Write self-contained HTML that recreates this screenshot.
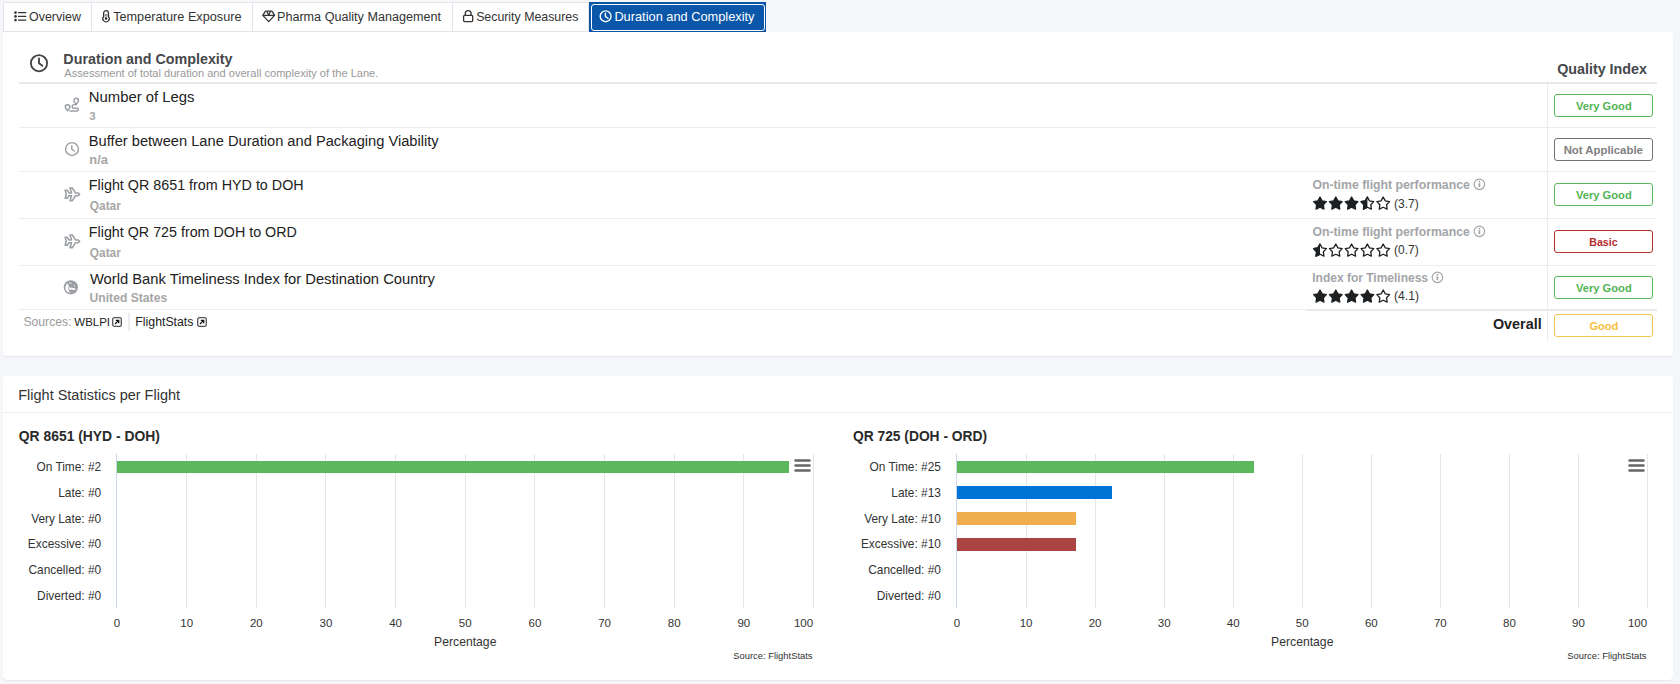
<!DOCTYPE html>
<html><head><meta charset="utf-8"><style>
html,body{margin:0;padding:0;}
body{width:1680px;height:684px;overflow:hidden;background:#f5f6fa;position:relative;font-family:"Liberation Sans",sans-serif;}
.t{position:absolute;white-space:nowrap;font-family:"Liberation Sans",sans-serif;}
svg{overflow:visible}
</style></head><body>
<div style="position:absolute;left:3px;top:2px;width:586px;height:30px;background:#fff;border:1px solid #e4e5e8;box-sizing:border-box;"></div>
<div style="position:absolute;left:91px;top:2px;width:1px;height:30px;background:#e4e5e8;"></div>
<div style="position:absolute;left:252px;top:2px;width:1px;height:30px;background:#e4e5e8;"></div>
<div style="position:absolute;left:452px;top:2px;width:1px;height:30px;background:#e4e5e8;"></div>
<div style="position:absolute;left:589px;top:2px;width:177px;height:30px;background:#0a55a5;"></div>
<div style="position:absolute;left:590.5px;top:3.5px;width:174px;height:27px;border:1px solid #fff;border-radius:3px;box-sizing:border-box;background:#0a56a8;"></div>
<div class="t" style="left:29.04px;top:10.00px;font-size:12.44px;line-height:14px;color:#333;">Overview</div>
<div class="t" style="left:113.15px;top:10.00px;font-size:12.7px;line-height:14px;color:#333;">Temperature Exposure</div>
<div class="t" style="left:276.99px;top:10.00px;font-size:12.62px;line-height:14px;color:#333;">Pharma Quality Management</div>
<div class="t" style="left:476.14px;top:10.00px;font-size:12.35px;line-height:14px;color:#333;">Security Measures</div>
<div class="t" style="left:614.38px;top:9.00px;font-size:12.81px;line-height:15px;color:#fff;">Duration and Complexity</div>
<svg style="position:absolute;left:13px;top:9px" width="15" height="15" viewBox="0 0 15 15"><g fill="#333"><circle cx="2.5" cy="3.6" r="1.3"/><circle cx="2.5" cy="7.4" r="1.3"/><circle cx="2.5" cy="11.1" r="1.3"/></g><g stroke="#333" stroke-width="1.3" stroke-linecap="round"><line x1="5.5" y1="3.6" x2="12.8" y2="3.6"/><line x1="5.5" y1="7.4" x2="12.8" y2="7.4"/><line x1="5.5" y1="11.1" x2="12.8" y2="11.1"/></g></svg>
<svg style="position:absolute;left:101px;top:9px" width="11" height="15" viewBox="0 0 11 15"><path d="M2.6 7.54 V4.15 A2.45 2.45 0 0 1 7.5 4.15 V7.54 A3.2 3.2 0 1 1 2.6 7.54 Z" fill="#fff" stroke="#333" stroke-width="1.2"/><rect x="3.3" y="5.0" width="3.5" height="2.6" fill="#9a9a9a"/><circle cx="5.05" cy="9.6" r="1.25" fill="#222"/></svg>
<svg style="position:absolute;left:261px;top:9px" width="15" height="14" viewBox="0 0 15 14"><g fill="none" stroke="#333" stroke-width="1.3" stroke-linejoin="round"><path d="M4.5 2.2 H10.9 L13.6 6.4 L7.7 12.6 L1.8 6.4Z"/><path d="M1.8 6.4 H13.6"/><path d="M5.9 2.3 L7.7 6.4 L9.5 2.3"/></g></svg>
<svg style="position:absolute;left:461px;top:9px" width="14" height="14" viewBox="0 0 14 14"><g fill="none" stroke="#333" stroke-width="1.3"><path d="M4.3 6.3 V4.5 a2.9 2.9 0 0 1 5.8 0 V6.3"/><rect x="2.6" y="6.3" width="9.1" height="6.3" rx="1"/></g></svg>
<svg style="position:absolute;left:598px;top:9px" width="15" height="15" viewBox="0 0 15 15"><g fill="none" stroke="#fff" stroke-width="1.4" stroke-linecap="round"><circle cx="7.6" cy="7.3" r="5.4"/><path d="M7.4 4.2 V7.5 L9.9 9.3"/></g></svg>
<div style="position:absolute;left:3px;top:32px;width:1670px;height:324px;background:#fff;border-radius:0 4px 4px 4px;box-shadow:0 1px 1px rgba(0,0,0,.06);"></div>
<svg style="position:absolute;left:29px;top:53px" width="20" height="20" viewBox="0 0 20 20"><g fill="none" stroke="#444" stroke-width="1.85" stroke-linecap="round"><circle cx="10" cy="10.2" r="8.1"/><path d="M10 5.3 V10.2 L13.4 12.7"/></g></svg>
<div class="t" style="left:63.37px;top:51.00px;font-size:14.31px;line-height:16px;color:#46484b;font-weight:bold;">Duration and Complexity</div>
<div class="t" style="left:64.30px;top:67.00px;font-size:11.09px;line-height:12px;color:#999;">Assessment of total duration and overall complexity of the Lane.</div>
<div class="t" style="left:1557.13px;top:61.00px;font-size:14.32px;line-height:16px;color:#46484b;font-weight:bold;">Quality Index</div>
<div style="position:absolute;left:19px;top:82px;width:1638px;height:2px;background:#e8e8e8;"></div>
<div style="position:absolute;left:19px;top:127px;width:1638px;height:1px;background:#ececec;"></div>
<div style="position:absolute;left:19px;top:171px;width:1638px;height:1px;background:#ececec;"></div>
<div style="position:absolute;left:19px;top:218px;width:1638px;height:1px;background:#ececec;"></div>
<div style="position:absolute;left:19px;top:265px;width:1638px;height:1px;background:#ececec;"></div>
<div style="position:absolute;left:19px;top:309px;width:1288px;height:1px;background:#ececec;"></div>
<div style="position:absolute;left:1307px;top:309px;width:350px;height:2px;background:#e8e8e8;"></div>
<div style="position:absolute;left:1547px;top:84px;width:1px;height:256px;background:#ececec;"></div>
<div class="t" style="left:88.81px;top:89.00px;font-size:14.86px;line-height:16px;color:#222;">Number of Legs</div>
<div class="t" style="left:89.30px;top:110.00px;font-size:11.5px;line-height:12px;color:#a6a6a6;font-weight:bold;">3</div>
<div class="t" style="left:88.83px;top:133.00px;font-size:14.67px;line-height:16px;color:#222;">Buffer between Lane Duration and Packaging Viability</div>
<div class="t" style="left:89.36px;top:152.00px;font-size:12.88px;line-height:15px;color:#a6a6a6;font-weight:bold;">n/a</div>
<div class="t" style="left:88.85px;top:177.00px;font-size:14.32px;line-height:16px;color:#222;">Flight QR 8651 from HYD to DOH</div>
<div class="t" style="left:89.83px;top:199.00px;font-size:11.88px;line-height:14px;color:#a6a6a6;font-weight:bold;">Qatar</div>
<div class="t" style="left:88.86px;top:224.00px;font-size:14.29px;line-height:16px;color:#222;">Flight QR 725 from DOH to ORD</div>
<div class="t" style="left:89.83px;top:246.00px;font-size:11.88px;line-height:14px;color:#a6a6a6;font-weight:bold;">Qatar</div>
<div class="t" style="left:89.93px;top:271.00px;font-size:14.75px;line-height:16px;color:#222;">World Bank Timeliness Index for Destination Country</div>
<div class="t" style="left:89.57px;top:291.00px;font-size:12.15px;line-height:14px;color:#a6a6a6;font-weight:bold;">United States</div>
<svg style="position:absolute;left:64px;top:97px" width="16" height="16" viewBox="0 0 16 16"><g fill="none" stroke="#9a9da1" stroke-width="1.45" stroke-linecap="round"><path d="M3.6 13.8 C2 12 1.3 11.2 1.3 10.1 a2.3 2.3 0 0 1 4.6 0 C5.9 11.2 5.2 12 3.6 13.8Z"/><path d="M12.2 7.4 C10.6 5.6 9.9 4.8 9.9 3.6 a2.3 2.3 0 0 1 4.6 0 C14.5 4.8 13.8 5.6 12.2 7.4Z"/><path d="M12.2 7.6 H10 a1.8 1.8 0 0 0 0 3.6 H13 a1.4 1.4 0 0 1 0 2.8 H6"/></g></svg>
<svg style="position:absolute;left:64px;top:141px" width="16" height="16" viewBox="0 0 16 16"><g fill="none" stroke="#9a9da1" stroke-width="1.4" stroke-linecap="round"><circle cx="8" cy="8" r="6.4"/><path d="M7.8 4.6 V8.2 L10.3 10"/></g></svg>
<svg style="position:absolute;left:63.8px;top:187.4px" width="17" height="15" viewBox="0 0 17 15"><path d="M1.2 3.3 L3.3 3.3 L5 5.9 L7.6 5.9 L6 1 L8.4 1 L11.5 5.9 L14 5.9 Q15.7 6.9 15.7 7.3 Q15.7 7.7 14 8.7 L11.5 8.7 L8.4 13.6 L6 13.6 L7.6 8.7 L5 8.7 L3.3 11.3 L1.2 11.3 L2.2 7.3Z" fill="none" stroke="#9a9da1" stroke-width="1.55" stroke-linejoin="round"/></svg>
<svg style="position:absolute;left:63.8px;top:234.4px" width="17" height="15" viewBox="0 0 17 15"><path d="M1.2 3.3 L3.3 3.3 L5 5.9 L7.6 5.9 L6 1 L8.4 1 L11.5 5.9 L14 5.9 Q15.7 6.9 15.7 7.3 Q15.7 7.7 14 8.7 L11.5 8.7 L8.4 13.6 L6 13.6 L7.6 8.7 L5 8.7 L3.3 11.3 L1.2 11.3 L2.2 7.3Z" fill="none" stroke="#9a9da1" stroke-width="1.55" stroke-linejoin="round"/></svg>
<svg style="position:absolute;left:63px;top:280px" width="16" height="16" viewBox="0 0 16 16"><circle cx="7.85" cy="7.35" r="7.1" fill="#9a9da1"/><g fill="#fff"><path d="M3.3 4.4 Q4.9 4.0 5.8 5.4 Q5.0 8.2 5.6 10.2 Q6.4 11.8 7.9 12.9 Q4.3 12.8 2.5 9.6 Q1.9 6.6 3.3 4.4 Z"/><path d="M6.0 7.5 Q9.5 7.6 12.4 8.6 L12.5 10.0 Q9.3 9.3 6.2 9.4 Z"/><circle cx="4.4" cy="3.9" r=".6"/><circle cx="6.6" cy="2.9" r=".6"/><circle cx="8.3" cy="3.5" r=".55"/><circle cx="11.4" cy="5.7" r=".6"/></g></svg>
<div class="t" style="left:1312.41px;top:178.00px;font-size:12.28px;line-height:14px;color:#a3a5a8;font-weight:bold;">On-time flight performance</div>
<svg style="position:absolute;left:1472.5px;top:177.7px" width="13" height="13" viewBox="0 0 13 13"><circle cx="6.4" cy="6.3" r="5.25" fill="none" stroke="#a3a5a8" stroke-width="1.2"/><rect x="5.55" y="5.2" width="1.7" height="4" fill="#a3a5a8"/><circle cx="6.4" cy="3.6" r=".95" fill="#a3a5a8"/></svg>
<svg style="position:absolute;left:1312.5px;top:195.8px" width="80" height="15" viewBox="0 0 80 15"><defs><clipPath id="hl195"><rect x="-1" y="-1" width="8" height="16"/></clipPath></defs><path transform="translate(0.0,0)" d="M7.00 1.00 L9.09 4.83 L13.37 5.63 L10.38 8.80 L10.94 13.12 L7.00 11.25 L3.06 13.12 L3.62 8.80 L0.63 5.63 L4.91 4.83Z" fill="#1d2023" stroke="#1d2023" stroke-width="1.3" stroke-linejoin="round"/><path transform="translate(15.8,0)" d="M7.00 1.00 L9.09 4.83 L13.37 5.63 L10.38 8.80 L10.94 13.12 L7.00 11.25 L3.06 13.12 L3.62 8.80 L0.63 5.63 L4.91 4.83Z" fill="#1d2023" stroke="#1d2023" stroke-width="1.3" stroke-linejoin="round"/><path transform="translate(31.6,0)" d="M7.00 1.00 L9.09 4.83 L13.37 5.63 L10.38 8.80 L10.94 13.12 L7.00 11.25 L3.06 13.12 L3.62 8.80 L0.63 5.63 L4.91 4.83Z" fill="#1d2023" stroke="#1d2023" stroke-width="1.3" stroke-linejoin="round"/><path transform="translate(47.400000000000006,0)" d="M7.00 1.00 L9.09 4.83 L13.37 5.63 L10.38 8.80 L10.94 13.12 L7.00 11.25 L3.06 13.12 L3.62 8.80 L0.63 5.63 L4.91 4.83Z" fill="none" stroke="#1d2023" stroke-width="1.3" stroke-linejoin="round"/><g transform="translate(47.400000000000006,0)"><path clip-path="url(#hl195)" d="M7.00 1.00 L9.09 4.83 L13.37 5.63 L10.38 8.80 L10.94 13.12 L7.00 11.25 L3.06 13.12 L3.62 8.80 L0.63 5.63 L4.91 4.83Z" fill="#1d2023" stroke="#1d2023" stroke-width="1.3" stroke-linejoin="round"/></g><path transform="translate(63.2,0)" d="M7.00 1.00 L9.09 4.83 L13.37 5.63 L10.38 8.80 L10.94 13.12 L7.00 11.25 L3.06 13.12 L3.62 8.80 L0.63 5.63 L4.91 4.83Z" fill="none" stroke="#1d2023" stroke-width="1.3" stroke-linejoin="round"/></svg>
<div class="t" style="left:1393.98px;top:197.00px;font-size:12.04px;line-height:14px;color:#333;">(3.7)</div>
<div class="t" style="left:1312.41px;top:225.00px;font-size:12.28px;line-height:14px;color:#a3a5a8;font-weight:bold;">On-time flight performance</div>
<svg style="position:absolute;left:1472.5px;top:224.7px" width="13" height="13" viewBox="0 0 13 13"><circle cx="6.4" cy="6.3" r="5.25" fill="none" stroke="#a3a5a8" stroke-width="1.2"/><rect x="5.55" y="5.2" width="1.7" height="4" fill="#a3a5a8"/><circle cx="6.4" cy="3.6" r=".95" fill="#a3a5a8"/></svg>
<svg style="position:absolute;left:1312.5px;top:242.8px" width="80" height="15" viewBox="0 0 80 15"><defs><clipPath id="hl242"><rect x="-1" y="-1" width="8" height="16"/></clipPath></defs><path transform="translate(0.0,0)" d="M7.00 1.00 L9.09 4.83 L13.37 5.63 L10.38 8.80 L10.94 13.12 L7.00 11.25 L3.06 13.12 L3.62 8.80 L0.63 5.63 L4.91 4.83Z" fill="none" stroke="#1d2023" stroke-width="1.3" stroke-linejoin="round"/><g transform="translate(0.0,0)"><path clip-path="url(#hl242)" d="M7.00 1.00 L9.09 4.83 L13.37 5.63 L10.38 8.80 L10.94 13.12 L7.00 11.25 L3.06 13.12 L3.62 8.80 L0.63 5.63 L4.91 4.83Z" fill="#1d2023" stroke="#1d2023" stroke-width="1.3" stroke-linejoin="round"/></g><path transform="translate(15.8,0)" d="M7.00 1.00 L9.09 4.83 L13.37 5.63 L10.38 8.80 L10.94 13.12 L7.00 11.25 L3.06 13.12 L3.62 8.80 L0.63 5.63 L4.91 4.83Z" fill="none" stroke="#1d2023" stroke-width="1.3" stroke-linejoin="round"/><path transform="translate(31.6,0)" d="M7.00 1.00 L9.09 4.83 L13.37 5.63 L10.38 8.80 L10.94 13.12 L7.00 11.25 L3.06 13.12 L3.62 8.80 L0.63 5.63 L4.91 4.83Z" fill="none" stroke="#1d2023" stroke-width="1.3" stroke-linejoin="round"/><path transform="translate(47.400000000000006,0)" d="M7.00 1.00 L9.09 4.83 L13.37 5.63 L10.38 8.80 L10.94 13.12 L7.00 11.25 L3.06 13.12 L3.62 8.80 L0.63 5.63 L4.91 4.83Z" fill="none" stroke="#1d2023" stroke-width="1.3" stroke-linejoin="round"/><path transform="translate(63.2,0)" d="M7.00 1.00 L9.09 4.83 L13.37 5.63 L10.38 8.80 L10.94 13.12 L7.00 11.25 L3.06 13.12 L3.62 8.80 L0.63 5.63 L4.91 4.83Z" fill="none" stroke="#1d2023" stroke-width="1.3" stroke-linejoin="round"/></svg>
<div class="t" style="left:1393.98px;top:243.00px;font-size:12.04px;line-height:14px;color:#333;">(0.7)</div>
<div class="t" style="left:1312.22px;top:271.00px;font-size:12.0px;line-height:14px;color:#a3a5a8;font-weight:bold;">Index for Timeliness</div>
<svg style="position:absolute;left:1430.5px;top:270.9px" width="13" height="13" viewBox="0 0 13 13"><circle cx="6.4" cy="6.3" r="5.25" fill="none" stroke="#a3a5a8" stroke-width="1.2"/><rect x="5.55" y="5.2" width="1.7" height="4" fill="#a3a5a8"/><circle cx="6.4" cy="3.6" r=".95" fill="#a3a5a8"/></svg>
<svg style="position:absolute;left:1312.5px;top:289px" width="80" height="15" viewBox="0 0 80 15"><defs><clipPath id="hl289"><rect x="-1" y="-1" width="8" height="16"/></clipPath></defs><path transform="translate(0.0,0)" d="M7.00 1.00 L9.09 4.83 L13.37 5.63 L10.38 8.80 L10.94 13.12 L7.00 11.25 L3.06 13.12 L3.62 8.80 L0.63 5.63 L4.91 4.83Z" fill="#1d2023" stroke="#1d2023" stroke-width="1.3" stroke-linejoin="round"/><path transform="translate(15.8,0)" d="M7.00 1.00 L9.09 4.83 L13.37 5.63 L10.38 8.80 L10.94 13.12 L7.00 11.25 L3.06 13.12 L3.62 8.80 L0.63 5.63 L4.91 4.83Z" fill="#1d2023" stroke="#1d2023" stroke-width="1.3" stroke-linejoin="round"/><path transform="translate(31.6,0)" d="M7.00 1.00 L9.09 4.83 L13.37 5.63 L10.38 8.80 L10.94 13.12 L7.00 11.25 L3.06 13.12 L3.62 8.80 L0.63 5.63 L4.91 4.83Z" fill="#1d2023" stroke="#1d2023" stroke-width="1.3" stroke-linejoin="round"/><path transform="translate(47.400000000000006,0)" d="M7.00 1.00 L9.09 4.83 L13.37 5.63 L10.38 8.80 L10.94 13.12 L7.00 11.25 L3.06 13.12 L3.62 8.80 L0.63 5.63 L4.91 4.83Z" fill="#1d2023" stroke="#1d2023" stroke-width="1.3" stroke-linejoin="round"/><path transform="translate(63.2,0)" d="M7.00 1.00 L9.09 4.83 L13.37 5.63 L10.38 8.80 L10.94 13.12 L7.00 11.25 L3.06 13.12 L3.62 8.80 L0.63 5.63 L4.91 4.83Z" fill="none" stroke="#1d2023" stroke-width="1.3" stroke-linejoin="round"/></svg>
<div class="t" style="left:1394.07px;top:289.00px;font-size:12.14px;line-height:14px;color:#333;">(4.1)</div>
<div style="position:absolute;left:1554px;top:94px;width:99px;height:23px;box-sizing:border-box;border:1px solid #5cb85c;border-radius:3px;"></div>
<div class="t" style="left:1575.94px;top:100.00px;font-size:11.16px;line-height:12px;color:#52b455;font-weight:bold;">Very Good</div>
<div style="position:absolute;left:1554px;top:138px;width:99px;height:23px;box-sizing:border-box;border:1px solid #737373;border-radius:3px;"></div>
<div class="t" style="left:1563.66px;top:144.00px;font-size:11.38px;line-height:12px;color:#808080;font-weight:bold;">Not Applicable</div>
<div style="position:absolute;left:1554px;top:183px;width:99px;height:23px;box-sizing:border-box;border:1px solid #5cb85c;border-radius:3px;"></div>
<div class="t" style="left:1575.94px;top:189.00px;font-size:11.16px;line-height:12px;color:#52b455;font-weight:bold;">Very Good</div>
<div style="position:absolute;left:1554px;top:230px;width:99px;height:23px;box-sizing:border-box;border:1px solid #b8302f;border-radius:3px;"></div>
<div class="t" style="left:1589.31px;top:236.00px;font-size:10.58px;line-height:12px;color:#b52d2d;font-weight:bold;">Basic</div>
<div style="position:absolute;left:1554px;top:276px;width:99px;height:23px;box-sizing:border-box;border:1px solid #5cb85c;border-radius:3px;"></div>
<div class="t" style="left:1575.94px;top:282.00px;font-size:11.16px;line-height:12px;color:#52b455;font-weight:bold;">Very Good</div>
<div style="position:absolute;left:1554px;top:314px;width:99px;height:23px;box-sizing:border-box;border:1px solid #f6c550;border-radius:3px;"></div>
<div class="t" style="left:1589.46px;top:320.00px;font-size:11.06px;line-height:12px;color:#f4c142;font-weight:bold;">Good</div>
<div class="t" style="left:1492.93px;top:316.00px;font-size:14.37px;line-height:16px;color:#222;font-weight:bold;">Overall</div>
<div class="t" style="left:23.45px;top:315.00px;font-size:12.2px;line-height:14px;color:#9a9a9a;">Sources:</div>
<div class="t" style="left:74.34px;top:316.00px;font-size:11.48px;line-height:12px;color:#222;">WBLPI</div>
<div class="t" style="left:135.32px;top:315.00px;font-size:12.3px;line-height:14px;color:#222;">FlightStats</div>
<svg style="position:absolute;left:112px;top:317px" width="10" height="10" viewBox="0 0 10 10"><rect x=".7" y=".7" width="8.6" height="8.6" rx="1.6" fill="none" stroke="#555" stroke-width="1.3"/><path d="M3 7 L6.6 3.4 M3.8 3.3 H6.7 V6.2" fill="none" stroke="#111" stroke-width="1.3"/></svg>
<svg style="position:absolute;left:196.5px;top:317px" width="10" height="10" viewBox="0 0 10 10"><rect x=".7" y=".7" width="8.6" height="8.6" rx="1.6" fill="none" stroke="#555" stroke-width="1.3"/><path d="M3 7 L6.6 3.4 M3.8 3.3 H6.7 V6.2" fill="none" stroke="#111" stroke-width="1.3"/></svg>
<div style="position:absolute;left:128px;top:313px;width:1.5px;height:18px;background:#ececec;"></div>
<div style="position:absolute;left:3px;top:376px;width:1670px;height:304px;background:#fff;border-radius:4px;box-shadow:0 1px 1px rgba(0,0,0,.06);"></div>
<div class="t" style="left:18.24px;top:387.00px;font-size:14.49px;line-height:16px;color:#333;">Flight Statistics per Flight</div>
<div style="position:absolute;left:4px;top:412px;width:1668px;height:1px;background:#ececec;"></div>
<div class="t" style="left:18.84px;top:428.00px;font-size:13.89px;line-height:16px;color:#2a2a2a;font-weight:bold;">QR 8651 (HYD - DOH)</div>
<div class="t" style="left:852.95px;top:428.00px;font-size:13.81px;line-height:16px;color:#2a2a2a;font-weight:bold;">QR 725 (DOH - ORD)</div>
<div style="position:absolute;left:116px;top:454px;width:1px;height:154px;background:#ccd6eb;"></div>
<div style="position:absolute;left:186px;top:454px;width:1px;height:154px;background:#e6e6e6;"></div>
<div style="position:absolute;left:256px;top:454px;width:1px;height:154px;background:#e6e6e6;"></div>
<div style="position:absolute;left:325px;top:454px;width:1px;height:154px;background:#e6e6e6;"></div>
<div style="position:absolute;left:395px;top:454px;width:1px;height:154px;background:#e6e6e6;"></div>
<div style="position:absolute;left:465px;top:454px;width:1px;height:154px;background:#e6e6e6;"></div>
<div style="position:absolute;left:534px;top:454px;width:1px;height:154px;background:#e6e6e6;"></div>
<div style="position:absolute;left:604px;top:454px;width:1px;height:154px;background:#e6e6e6;"></div>
<div style="position:absolute;left:674px;top:454px;width:1px;height:154px;background:#e6e6e6;"></div>
<div style="position:absolute;left:743px;top:454px;width:1px;height:154px;background:#e6e6e6;"></div>
<div style="position:absolute;left:813px;top:454px;width:1px;height:154px;background:#e6e6e6;"></div>
<div class="t" style="right:1578.80px;top:460.00px;font-size:11.9px;line-height:14px;color:#333;">On Time: #2</div>
<div style="position:absolute;left:117px;top:460.5px;width:672.1px;height:12.8px;background:#5cb85c;"></div>
<div class="t" style="right:1578.80px;top:486.00px;font-size:11.9px;line-height:14px;color:#333;">Late: #0</div>
<div class="t" style="right:1578.80px;top:512.00px;font-size:11.9px;line-height:14px;color:#333;">Very Late: #0</div>
<div class="t" style="right:1578.80px;top:537.00px;font-size:11.9px;line-height:14px;color:#333;">Excessive: #0</div>
<div class="t" style="right:1578.80px;top:563.00px;font-size:11.9px;line-height:14px;color:#333;">Cancelled: #0</div>
<div class="t" style="right:1578.80px;top:589.00px;font-size:11.9px;line-height:14px;color:#333;">Diverted: #0</div>
<div class="t" style="left:-183.00px;width:600px;text-align:center;top:617.00px;font-size:11.5px;line-height:12px;color:#333;">0</div>
<div class="t" style="left:-113.35px;width:600px;text-align:center;top:617.00px;font-size:11.5px;line-height:12px;color:#333;">10</div>
<div class="t" style="left:-43.70px;width:600px;text-align:center;top:617.00px;font-size:11.5px;line-height:12px;color:#333;">20</div>
<div class="t" style="left:25.95px;width:600px;text-align:center;top:617.00px;font-size:11.5px;line-height:12px;color:#333;">30</div>
<div class="t" style="left:95.60px;width:600px;text-align:center;top:617.00px;font-size:11.5px;line-height:12px;color:#333;">40</div>
<div class="t" style="left:165.25px;width:600px;text-align:center;top:617.00px;font-size:11.5px;line-height:12px;color:#333;">50</div>
<div class="t" style="left:234.90px;width:600px;text-align:center;top:617.00px;font-size:11.5px;line-height:12px;color:#333;">60</div>
<div class="t" style="left:304.55px;width:600px;text-align:center;top:617.00px;font-size:11.5px;line-height:12px;color:#333;">70</div>
<div class="t" style="left:374.20px;width:600px;text-align:center;top:617.00px;font-size:11.5px;line-height:12px;color:#333;">80</div>
<div class="t" style="left:443.85px;width:600px;text-align:center;top:617.00px;font-size:11.5px;line-height:12px;color:#333;">90</div>
<div class="t" style="left:503.50px;width:600px;text-align:center;top:617.00px;font-size:11.5px;line-height:12px;color:#333;">100</div>
<div class="t" style="left:165.25px;width:600px;text-align:center;top:635.00px;font-size:12.2px;line-height:14px;color:#333;">Percentage</div>
<div class="t" style="right:867.50px;top:650.00px;font-size:9.4px;line-height:11px;color:#333;">Source: FlightStats</div>
<svg style="position:absolute;left:793.5px;top:458px" width="17" height="15" viewBox="0 0 17 15"><g stroke="#666" stroke-width="2.4" stroke-linecap="round"><line x1="1.5" y1="2.5" x2="15.5" y2="2.5"/><line x1="1.5" y1="7.5" x2="15.5" y2="7.5"/><line x1="1.5" y1="12.5" x2="15.5" y2="12.5"/></g></svg>
<div style="position:absolute;left:956px;top:454px;width:1px;height:154px;background:#ccd6eb;"></div>
<div style="position:absolute;left:1026px;top:454px;width:1px;height:154px;background:#e6e6e6;"></div>
<div style="position:absolute;left:1095px;top:454px;width:1px;height:154px;background:#e6e6e6;"></div>
<div style="position:absolute;left:1164px;top:454px;width:1px;height:154px;background:#e6e6e6;"></div>
<div style="position:absolute;left:1233px;top:454px;width:1px;height:154px;background:#e6e6e6;"></div>
<div style="position:absolute;left:1302px;top:454px;width:1px;height:154px;background:#e6e6e6;"></div>
<div style="position:absolute;left:1371px;top:454px;width:1px;height:154px;background:#e6e6e6;"></div>
<div style="position:absolute;left:1440px;top:454px;width:1px;height:154px;background:#e6e6e6;"></div>
<div style="position:absolute;left:1509px;top:454px;width:1px;height:154px;background:#e6e6e6;"></div>
<div style="position:absolute;left:1578px;top:454px;width:1px;height:154px;background:#e6e6e6;"></div>
<div style="position:absolute;left:1647px;top:454px;width:1px;height:154px;background:#e6e6e6;"></div>
<div class="t" style="right:739.10px;top:460.00px;font-size:11.9px;line-height:14px;color:#333;">On Time: #25</div>
<div style="position:absolute;left:957px;top:460.5px;width:296.9px;height:12.8px;background:#5cb85c;"></div>
<div class="t" style="right:739.10px;top:486.00px;font-size:11.9px;line-height:14px;color:#333;">Late: #13</div>
<div style="position:absolute;left:957px;top:486.3px;width:155.4px;height:12.8px;background:#0073d6;"></div>
<div class="t" style="right:739.10px;top:512.00px;font-size:11.9px;line-height:14px;color:#333;">Very Late: #10</div>
<div style="position:absolute;left:957px;top:512.1px;width:118.8px;height:12.8px;background:#f0ad4e;"></div>
<div class="t" style="right:739.10px;top:537.00px;font-size:11.9px;line-height:14px;color:#333;">Excessive: #10</div>
<div style="position:absolute;left:957px;top:537.9px;width:118.8px;height:12.8px;background:#a94442;"></div>
<div class="t" style="right:739.10px;top:563.00px;font-size:11.9px;line-height:14px;color:#333;">Cancelled: #0</div>
<div class="t" style="right:739.10px;top:589.00px;font-size:11.9px;line-height:14px;color:#333;">Diverted: #0</div>
<div class="t" style="left:657.00px;width:600px;text-align:center;top:617.00px;font-size:11.5px;line-height:12px;color:#333;">0</div>
<div class="t" style="left:726.05px;width:600px;text-align:center;top:617.00px;font-size:11.5px;line-height:12px;color:#333;">10</div>
<div class="t" style="left:795.10px;width:600px;text-align:center;top:617.00px;font-size:11.5px;line-height:12px;color:#333;">20</div>
<div class="t" style="left:864.15px;width:600px;text-align:center;top:617.00px;font-size:11.5px;line-height:12px;color:#333;">30</div>
<div class="t" style="left:933.20px;width:600px;text-align:center;top:617.00px;font-size:11.5px;line-height:12px;color:#333;">40</div>
<div class="t" style="left:1002.25px;width:600px;text-align:center;top:617.00px;font-size:11.5px;line-height:12px;color:#333;">50</div>
<div class="t" style="left:1071.30px;width:600px;text-align:center;top:617.00px;font-size:11.5px;line-height:12px;color:#333;">60</div>
<div class="t" style="left:1140.35px;width:600px;text-align:center;top:617.00px;font-size:11.5px;line-height:12px;color:#333;">70</div>
<div class="t" style="left:1209.40px;width:600px;text-align:center;top:617.00px;font-size:11.5px;line-height:12px;color:#333;">80</div>
<div class="t" style="left:1278.45px;width:600px;text-align:center;top:617.00px;font-size:11.5px;line-height:12px;color:#333;">90</div>
<div class="t" style="left:1337.50px;width:600px;text-align:center;top:617.00px;font-size:11.5px;line-height:12px;color:#333;">100</div>
<div class="t" style="left:1002.25px;width:600px;text-align:center;top:635.00px;font-size:12.2px;line-height:14px;color:#333;">Percentage</div>
<div class="t" style="right:33.50px;top:650.00px;font-size:9.4px;line-height:11px;color:#333;">Source: FlightStats</div>
<svg style="position:absolute;left:1627.5px;top:458px" width="17" height="15" viewBox="0 0 17 15"><g stroke="#666" stroke-width="2.4" stroke-linecap="round"><line x1="1.5" y1="2.5" x2="15.5" y2="2.5"/><line x1="1.5" y1="7.5" x2="15.5" y2="7.5"/><line x1="1.5" y1="12.5" x2="15.5" y2="12.5"/></g></svg>
</body></html>
